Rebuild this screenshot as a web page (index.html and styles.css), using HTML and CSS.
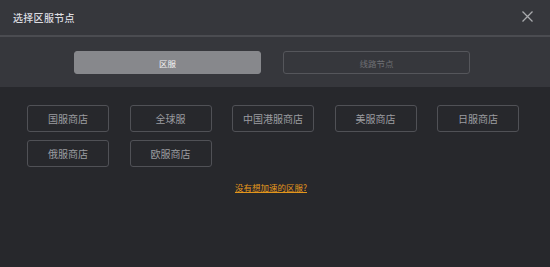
FILE: index.html
```html
<!DOCTYPE html>
<html lang="zh-CN">
<head>
<meta charset="utf-8">
<title>选择区服节点</title>
<link rel="stylesheet" href="styles.css">
</head>
<body>
<div class="dialog">
  <div class="header">
    <span class="title">选择区服节点</span>
    <svg class="close" width="11" height="11" viewBox="0 0 11 11"><path d="M0.5 0.5 L10.5 10.5 M10.5 0.5 L0.5 10.5" stroke="#a9aaad" stroke-width="1.3" fill="none"/></svg>
  </div>
  <div class="divider"></div>
  <div class="tabs">
    <div class="tab active">区服</div>
    <div class="tab">线路节点</div>
  </div>
  <div class="content">
    <div class="grid">
      <div class="item">国服商店</div>
      <div class="item">全球服</div>
      <div class="item">中国港服商店</div>
      <div class="item">美服商店</div>
      <div class="item">日服商店</div>
      <div class="item">俄服商店</div>
      <div class="item">欧服商店</div>
    </div>
    <div class="link-row"><a class="link" href="#">没有想加速的区服?</a></div>
  </div>
</div>
</body>
</html>
```
FILE: styles.css
```css
html, body {
  margin: 0;
  padding: 0;
}
body {
  width: 550px;
  height: 267px;
  background: #27282c;
  font-family: "Noto Sans CJK SC", "Noto Sans", sans-serif;
  overflow: hidden;
}
.dialog {
  width: 550px;
  height: 267px;
  display: flex;
  flex-direction: column;
}
.header {
  height: 35px;
  background: #36373c;
  display: flex;
  align-items: center;
  justify-content: space-between;
  padding: 0 17px 0 13px;
}
.title {
  color: #dcdde0;
  font-size: 10px;
  line-height: 12px;
  font-weight: 500;
  letter-spacing: 0.3px;
  margin-top: 1px;
}
.close {
  display: block;
  margin-top: -3px;
}
.divider {
  height: 2px;
  background: #4b4c51;
}
.tabs {
  height: 50px;
  box-sizing: border-box;
  background: #36373c;
  display: flex;
  padding: 14px 0 0 74px;
  gap: 22px;
}
.tab {
  width: 187px;
  height: 23px;
  box-sizing: border-box;
  border: 1px solid #55565b;
  border-radius: 3px;
  color: #6e6f74;
  font-size: 8.5px;
  display: flex;
  align-items: center;
  justify-content: center;
}
.tab.active {
  background: #87888c;
  border-color: #87888c;
  color: #f2f2f2;
}
.content {
  flex: 1;
  padding: 18px 0 0 27px;
}
.grid {
  display: grid;
  grid-template-columns: repeat(5, 82px);
  grid-auto-rows: 27px;
  column-gap: 20.5px;
  row-gap: 8px;
}
.item {
  box-sizing: border-box;
  border: 1px solid #505156;
  border-radius: 3px;
  color: #9c9da1;
  font-size: 10px;
  display: flex;
  align-items: center;
  justify-content: center;
}
.link-row {
  width: 492px;
  text-align: center;
  margin-top: 11px;
  line-height: 12px;
}
.link {
  color: #e2961c;
  font-size: 8.5px;
  text-decoration: underline;
  margin-left: -4px;
}
```
